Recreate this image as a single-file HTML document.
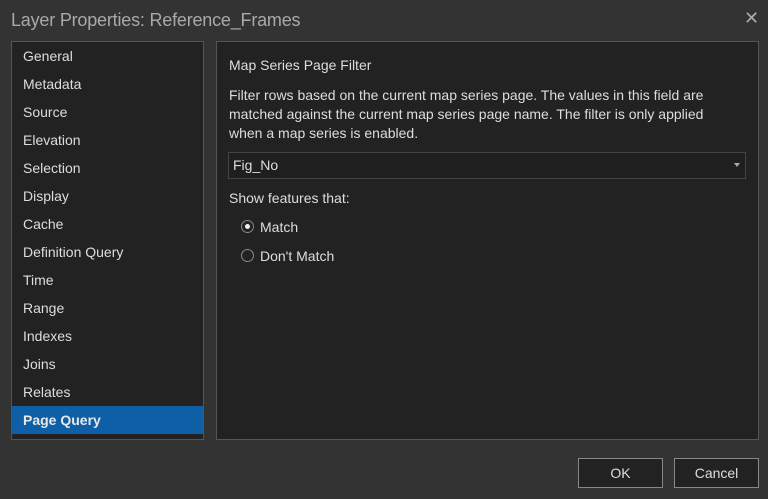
<!DOCTYPE html>
<html><head><style>
*{margin:0;padding:0;box-sizing:border-box}
body{width:768px;height:499px;background:#333;font-family:"Liberation Sans",sans-serif;color:#ddd;position:relative;overflow:hidden;font-size:14px}
.title{position:absolute;left:11px;top:10px;font-size:18px;color:#a9a9a9;letter-spacing:-0.2px}
.close{position:absolute;left:744px;top:8px;font-size:18px;color:#aaa}
.lp{position:absolute;left:11px;top:41px;width:193px;height:399px;background:#222;border:1px solid #555}
.row{height:28px;line-height:28px;padding-left:11px;font-size:14px;color:#ddd}
.sel{background:#0f5fa6;font-weight:bold;color:#e8e8e8}
.rp{position:absolute;left:216px;top:41px;width:543px;height:399px;background:#222;border:1px solid #555}
.t{position:absolute;left:12px;font-size:14px;color:#ddd}
.dd{position:absolute;left:11px;top:110px;width:518px;height:27px;border:1px solid #444;background:#1f1f1f;padding-left:4px;line-height:25px}
.arr{position:absolute;right:5px;top:10px;width:0;height:0;border-left:3px solid transparent;border-right:3px solid transparent;border-top:4px solid #aaa}
.rad{position:absolute;left:24px;width:13px;height:13px;border:1px solid #888;border-radius:50%}
.btn{position:absolute;top:458px;width:85px;height:30px;border:1px solid #888;background:#222;text-align:center;line-height:28px;font-size:14px;color:#ddd}
</style></head><body>
<div class="title">Layer Properties: Reference_Frames</div>
<div class="close">✕</div>
<div class="lp">
<div class="row">General</div><div class="row">Metadata</div><div class="row">Source</div><div class="row">Elevation</div><div class="row">Selection</div><div class="row">Display</div><div class="row">Cache</div><div class="row">Definition Query</div><div class="row">Time</div><div class="row">Range</div><div class="row">Indexes</div><div class="row">Joins</div><div class="row">Relates</div><div class="row sel">Page Query</div>
</div>
<div class="rp">
<div class="t" style="top:15px">Map Series Page Filter</div>
<div class="t" style="top:44px;line-height:19px;width:520px">Filter rows based on the current map series page. The values in this field are<br>matched against the current map series page name. The filter is only applied<br>when a map series is enabled.</div>
<div class="dd">Fig_No<div class="arr"></div></div>
<div class="t" style="top:148px">Show features that:</div>
<div class="rad" style="top:178px"><div style="position:absolute;left:3px;top:3px;width:5px;height:5px;border-radius:50%;background:#eee"></div></div>
<div class="t" style="left:43px;top:177px">Match</div>
<div class="rad" style="top:207px"></div>
<div class="t" style="left:43px;top:206px">Don't Match</div>
</div>
<div class="btn" style="left:578px">OK</div>
<div class="btn" style="left:674px">Cancel</div>
</body></html>
